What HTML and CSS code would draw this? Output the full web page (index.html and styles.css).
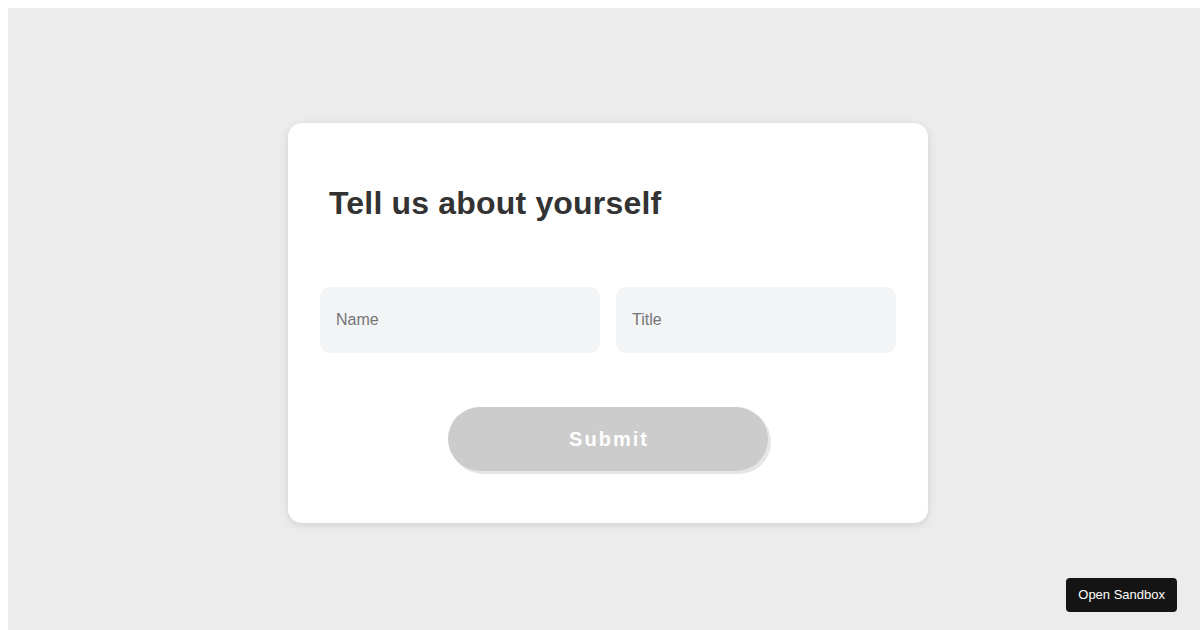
FILE: index.html
```html
<!DOCTYPE html>
<html>
<head>
<meta charset="utf-8">
<link rel="stylesheet" href="styles.css">
</head>
<body>
<div class="frame">
  <div class="stage">
    <form class="card">
      <h1 class="title">Tell us about yourself</h1>
      <div class="fields">
        <input class="field" type="text" placeholder="Name">
        <input class="field" type="text" placeholder="Title">
      </div>
      <div class="actions">
        <button class="submit" type="button">Submit</button>
      </div>
    </form>
  </div>
</div>
<a class="sandbox">Open Sandbox</a>
</body>
</html>
```
FILE: styles.css
```css
html, body { overflow: hidden; }
body {
  margin: 0;
  background: #fff;
  font-family: "Liberation Sans", Arial, sans-serif;
}
.frame {
  box-sizing: border-box;
  width: 100vw;
  height: 100vh;
  padding: 8px 0 0 8px;
  overflow: hidden;
}
.stage {
  width: 100vw;
  height: 100vh;
  flex-shrink: 0;
  background: #ececec;
  display: flex;
  align-items: center;
  justify-content: center;
}
.card {
  box-sizing: border-box;
  width: 640px;
  height: 400px;
  flex-shrink: 0;
  background: #fff;
  border-radius: 14px;
  box-shadow: 0 2px 8px rgba(0,0,0,0.12);
  padding: 32px;
  display: flex;
  flex-direction: column;
}
.title {
  margin: 30px 0 0 9px;
  font-size: 32px;
  font-weight: bold;
  letter-spacing: 0.18px;
  color: #333;
  line-height: normal;
}
.fields {
  display: flex;
  gap: 16px;
  margin-top: 65px;
}
.field {
  box-sizing: border-box;
  width: 280px;
  height: 66px;
  border: none;
  border-radius: 10px;
  background: #f3f4f6;
  padding: 0 16px;
  font-family: "Liberation Sans", Arial, sans-serif;
  font-size: 16px;
  color: #333;
  outline: none;
}
.field::placeholder { color: #757575; }
.actions {
  display: flex;
  justify-content: center;
  margin-top: 54px;
}
.submit {
  width: 320px;
  height: 64px;
  border: none;
  border-radius: 32px;
  background: #cccccc;
  color: #fff;
  font-family: "Liberation Sans", Arial, sans-serif;
  font-weight: bold;
  font-size: 20px;
  letter-spacing: 2px;
  box-shadow: 3px 3px 0 #e6e6e6;
  padding: 0 0 0 2px;
}
.sandbox {
  position: fixed;
  right: 23px;
  bottom: 18px;
  background: #141414;
  color: #fff;
  font-size: 13px;
  border-radius: 4px;
  padding: 0 12px;
  height: 34px;
  line-height: 34px;
  font-family: "Liberation Sans", Arial, sans-serif;
}
```
